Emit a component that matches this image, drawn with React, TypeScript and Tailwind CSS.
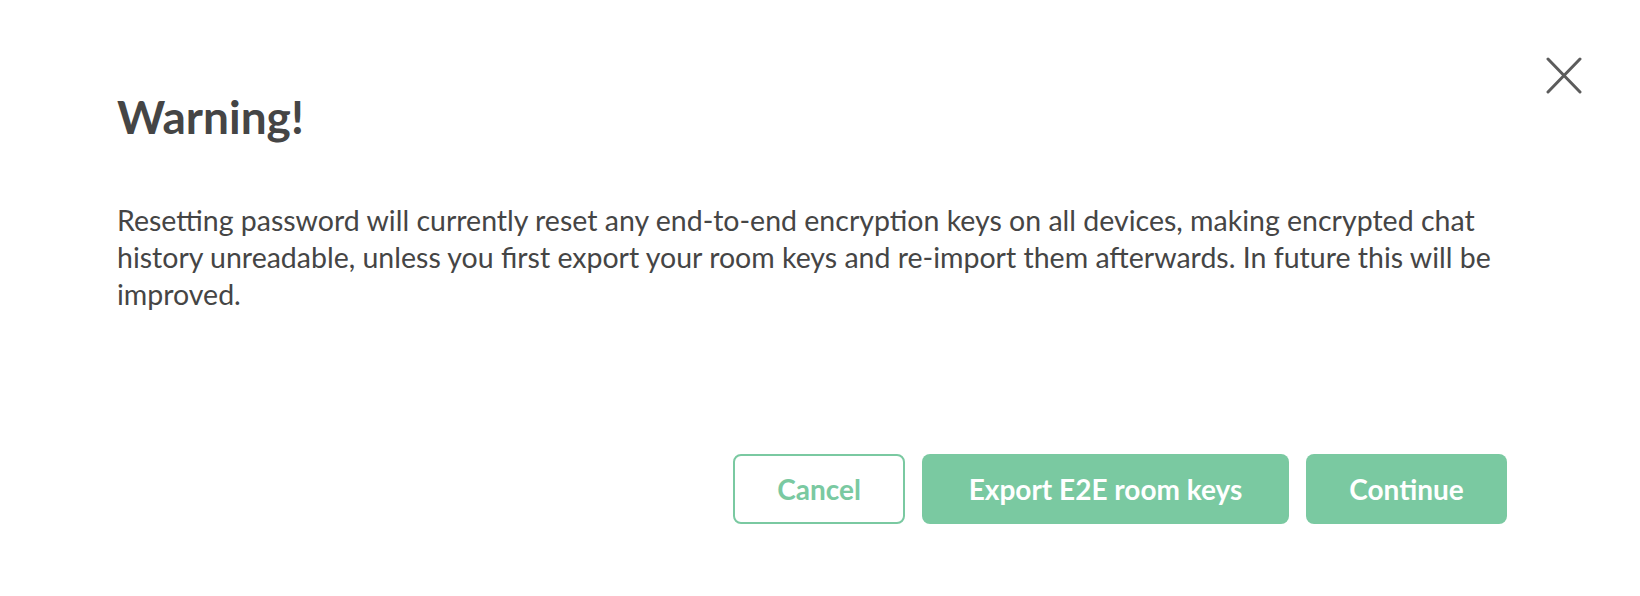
import React from "react";

export default function App() {
  return (
    <div className="relative w-[1640px] h-[596px] bg-white font-['Lato','Noto_Sans',sans-serif] text-[#454545]">
      <button
        aria-label="Close"
        className="absolute left-[1546px] top-[57px] w-[36px] h-[37px] flex items-center justify-center"
      >
        <svg width="36" height="37" viewBox="0 0 36 37" fill="none">
          <path d="M2 2L34 35M34 2L2 35" stroke="#5c5c5c" strokeWidth="3" strokeLinecap="round" />
        </svg>
      </button>
      <div className="pl-[117px] pr-[133px] pt-[89px] flex flex-col">
        <h2 className="text-[46px] leading-[55px] font-bold">Warning!</h2>
        <p className="mt-[58px] w-[1400px] text-[28.5px] leading-[37px]">
          Resetting password will currently reset any end-to-end encryption keys on all devices, making encrypted chat history unreadable, unless you first export your room keys and re-import them afterwards. In future this will be improved.
        </p>
        <div className="mt-[141px] flex justify-end gap-[17px]">
          <button className="w-[172px] h-[70px] rounded-[8px] border-2 border-[#7ac9a1] bg-white text-[#7ac9a1] text-[28px] font-bold flex items-center justify-center">
            Cancel
          </button>
          <button className="w-[367px] h-[70px] rounded-[8px] bg-[#7ac9a1] text-white text-[28px] font-bold flex items-center justify-center">
            Export E2E room keys
          </button>
          <button className="w-[201px] h-[70px] rounded-[8px] bg-[#7ac9a1] text-white text-[28px] font-bold flex items-center justify-center">
            Continue
          </button>
        </div>
      </div>
    </div>
  );
}
